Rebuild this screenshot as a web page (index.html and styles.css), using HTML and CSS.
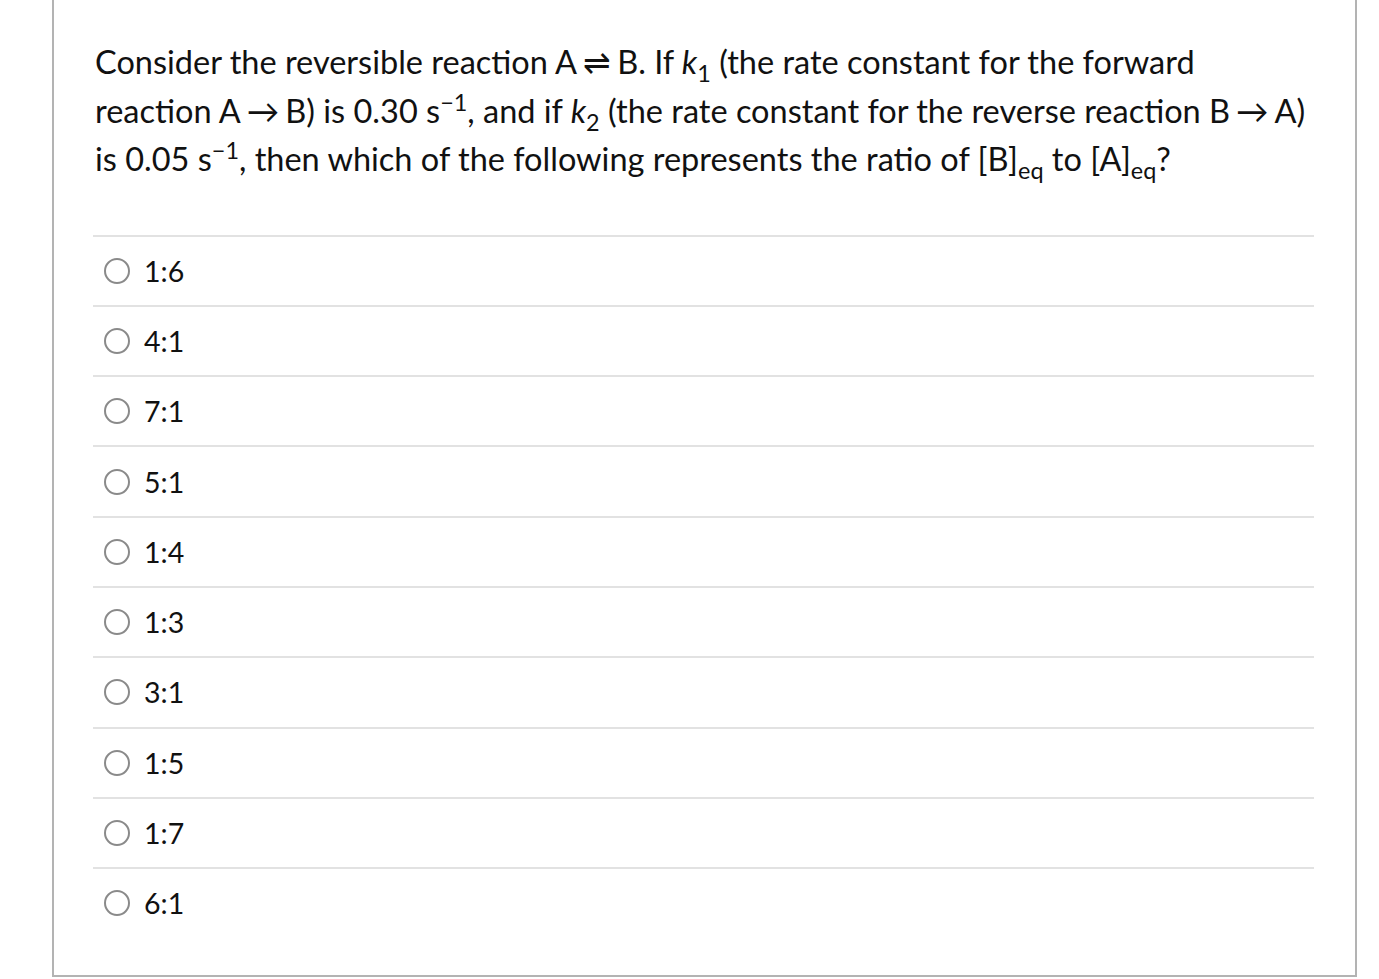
FILE: index.html
```html
<!DOCTYPE html>
<html>
<head>
<meta charset="utf-8">
<link rel="stylesheet" href="styles.css">
</head>
<body>
<div class="card">
  <p class="question">Consider the reversible reaction A<span class="sym">⇌</span>B. If <i>k</i><sub>1</sub> (the rate constant for the forward reaction A<span class="sym">→</span>B) is 0.30&nbsp;s<sup>−1</sup>, and if <i>k</i><sub>2</sub> (the rate constant for the reverse reaction B<span class="sym">→</span>A) is 0.05&nbsp;s<sup>−1</sup>, then which of the following represents the ratio of [B]<sub>eq</sub> to [A]<sub>eq</sub>?</p>
  <ul class="answers">
    <li class="answer"><span class="radio"></span><span class="label">1:6</span></li>
    <li class="answer"><span class="radio"></span><span class="label">4:1</span></li>
    <li class="answer"><span class="radio"></span><span class="label">7:1</span></li>
    <li class="answer"><span class="radio"></span><span class="label">5:1</span></li>
    <li class="answer"><span class="radio"></span><span class="label">1:4</span></li>
    <li class="answer"><span class="radio"></span><span class="label">1:3</span></li>
    <li class="answer"><span class="radio"></span><span class="label">3:1</span></li>
    <li class="answer"><span class="radio"></span><span class="label">1:5</span></li>
    <li class="answer"><span class="radio"></span><span class="label">1:7</span></li>
    <li class="answer"><span class="radio"></span><span class="label">6:1</span></li>
  </ul>
</div>
</body>
</html>
```
FILE: styles.css
```css
html, body {
  margin: 0;
  padding: 0;
  background: #fff;
}
body {
  font-family: Lato, "Open Sans", sans-serif;
  color: #111;
}
.card {
  box-sizing: border-box;
  margin-left: 52px;
  width: 1305px;
  border-left: 2px solid #b3b3b3;
  border-right: 2px solid #b3b3b3;
  border-bottom: 2px solid #b3b3b3;
  padding: 38px 41px 38px 39px;
}
.question {
  margin: 0 0 51px 2px;
  max-width: 1215px;
  font-size: 32.5px;
  line-height: 48.5px;
}
.question .sym {
  margin: 0 6px;
}
.question sub, .question sup {
  font-size: 0.72em;
  line-height: 0;
}
.answers {
  list-style: none;
  margin: 0;
  padding: 0;
}
.answer {
  display: flex;
  align-items: center;
  height: 68.3px;
  border-top: 2px solid #e2e2e2;
}
.radio {
  box-sizing: border-box;
  width: 26px;
  height: 26px;
  border: 2px solid #8a8a8a;
  border-radius: 50%;
  margin-left: 11px;
  margin-right: 14px;
}
.label {
  font-size: 28.5px;
}
```
